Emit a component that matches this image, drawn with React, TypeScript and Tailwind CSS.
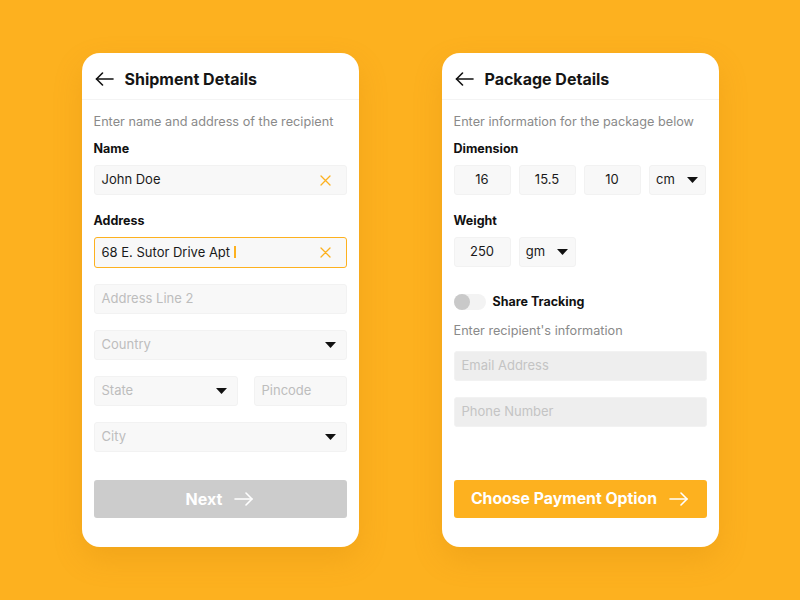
import React from 'react';

const font = { fontFamily: 'Inter, "Liberation Sans", sans-serif' };

function ArrowLeft() {
  return (
    <svg width="19" height="14" viewBox="0 0 19 14" fill="none" stroke="#111" strokeWidth="1.6" strokeLinecap="round" strokeLinejoin="round">
      <path d="M18 7H1.5" />
      <path d="M7.5 1L1.5 7l6 6" />
    </svg>
  );
}

function ArrowRight({ color = '#fff' }: { color?: string }) {
  return (
    <svg width="20" height="14" viewBox="0 0 20 14" fill="none" stroke={color} strokeWidth="1.6" strokeLinecap="round" strokeLinejoin="round">
      <path d="M1 7h17" />
      <path d="M12 1l6 6-6 6" />
    </svg>
  );
}

function Clear() {
  return (
    <svg width="11" height="11" viewBox="0 0 11 11" stroke="#fdb11f" strokeWidth="1.3" strokeLinecap="round">
      <path d="M1 1l9 9M10 1l-9 9" />
    </svg>
  );
}

function Caret() {
  return (
    <svg width="11" height="6" viewBox="0 0 11 6">
      <path d="M0 0h11L5.5 6z" fill="#111" />
    </svg>
  );
}

function Header({ title }: { title: string }) {
  return (
    <div className="flex h-[47px] items-center gap-[11px] border-b border-[#f4f4f4] pl-[13px] pt-[5px]">
      <ArrowLeft />
      <span className="text-[16px] font-bold text-[#151515]">{title}</span>
    </div>
  );
}

function Label({ children, className = '' }: { children: React.ReactNode; className?: string }) {
  return <div className={`h-4 text-[12.5px] font-bold leading-4 text-[#111] ${className}`}>{children}</div>;
}

function Field({
  value,
  placeholder,
  clear,
  caret,
  focused,
  className = '',
  dim,
}: {
  value?: string;
  placeholder?: string;
  clear?: boolean;
  caret?: boolean;
  focused?: boolean;
  className?: string;
  dim?: boolean;
}) {
  return (
    <div
      className={`flex items-center justify-between rounded-[3px] px-[7px] text-[13px] ${
        dim ? 'bg-[#eeeeee]' : 'bg-[#f8f8f8]'
      } ${focused ? 'h-[31px] border border-[#fdb11f]' : 'h-[30px] border border-[#f2f2f2]'} ${className}`}
    >
      {value ? (
        <span className="text-[#1a1a1a]">
          {value}
          {focused && <span className="ml-[4px] inline-block h-[12px] w-[1.5px] translate-y-[1px] bg-[#fdb11f]" />}
        </span>
      ) : (
        <span className={dim ? 'text-[#c4c4c4]' : 'text-[#bdbdbd]'}>{placeholder}</span>
      )}
      {clear && (
        <span className="mr-[8px]">
          <Clear />
        </span>
      )}
      {caret && (
        <span className="mr-[3px]">
          <Caret />
        </span>
      )}
    </div>
  );
}

function Box({ value, caret }: { value: string; caret?: boolean }) {
  return (
    <div className="flex h-[30px] w-[57px] items-center justify-center gap-[12px] rounded-[3px] border border-[#f2f2f2] bg-[#f8f8f8] text-[13px] text-[#1a1a1a]">
      <span>{value}</span>
      {caret && <Caret />}
    </div>
  );
}

function ShipmentCard() {
  return (
    <div className="flex h-[494px] w-[277px] flex-col rounded-[18px] bg-white shadow-[0_12px_30px_rgba(190,110,0,0.18)]">
      <Header title="Shipment Details" />
      <div className="flex flex-col px-3 pt-[14px]">
        <div className="h-4 text-[12.7px] leading-4 text-[#8a8a8a]">Enter name and address of the recipient</div>
        <Label className="mt-[11px]">Name</Label>
        <Field className="mt-2" value="John Doe" clear />
        <Label className="mt-[18px]">Address</Label>
        <Field className="mt-2" value="68 E. Sutor Drive Apt" clear focused />
        <Field className="mt-4" placeholder="Address Line 2" />
        <Field className="mt-4" placeholder="Country" caret />
        <div className="mt-4 flex gap-4">
          <Field className="w-[144px]" placeholder="State" caret />
          <Field className="flex-1" placeholder="Pincode" />
        </div>
        <Field className="mt-4" placeholder="City" caret />
        <button className="mt-[28px] flex h-[38px] items-center justify-center gap-[12px] rounded-[3px] bg-[#cccccc] text-[16px] font-bold text-white">
          Next
          <ArrowRight />
        </button>
      </div>
    </div>
  );
}

function PackageCard() {
  return (
    <div className="flex h-[494px] w-[277px] flex-col rounded-[18px] bg-white shadow-[0_12px_30px_rgba(190,110,0,0.18)]">
      <Header title="Package Details" />
      <div className="flex flex-col px-3 pt-[14px]">
        <div className="h-4 text-[12.7px] leading-4 text-[#8a8a8a]">Enter information for the package below</div>
        <Label className="mt-[11px]">Dimension</Label>
        <div className="mt-2 flex gap-2">
          <Box value="16" />
          <Box value="15.5" />
          <Box value="10" />
          <Box value="cm" caret />
        </div>
        <Label className="mt-[18px]">Weight</Label>
        <div className="mt-2 flex gap-2">
          <Box value="250" />
          <Box value="gm" caret />
        </div>
        <div className="mt-[27px] flex h-4 items-center gap-[7px]">
          <div className="flex h-[16px] w-[32px] items-center rounded-full bg-[#f3f3f3]">
            <div className="h-[16px] w-[16px] rounded-full bg-[#c9c9c9]" />
          </div>
          <span className="text-[12.5px] font-bold text-[#111]">Share Tracking</span>
        </div>
        <div className="mt-[13px] h-4 text-[12.7px] leading-4 text-[#8a8a8a]">Enter recipient's information</div>
        <Field className="mt-3" placeholder="Email Address" dim />
        <Field className="mt-4" placeholder="Phone Number" dim />
        <button className="mt-[53px] flex h-[38px] items-center justify-center gap-[12px] rounded-[3px] bg-[#fdb11f] text-[15.8px] font-bold text-white">
          Choose Payment Option
          <ArrowRight />
        </button>
      </div>
    </div>
  );
}

export default function App() {
  return (
    <div className="flex h-[600px] w-[800px] items-center justify-center gap-[83px] bg-[#fdb11f]" style={font}>
      <ShipmentCard />
      <PackageCard />
    </div>
  );
}
